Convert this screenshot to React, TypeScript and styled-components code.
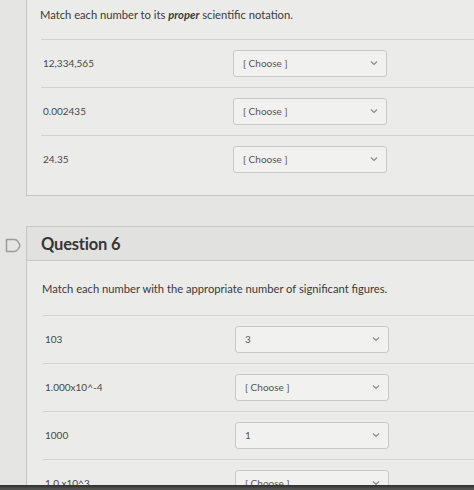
import React from "react";
import styled, { createGlobalStyle } from "styled-components";

const GlobalStyle = createGlobalStyle`
  html, body {
    margin: 0;
    padding: 0;
    background: #e5e5e3;
  }
  body {
    font-family: Lato, "Open Sans", "Liberation Sans", sans-serif;
  }
`;

const Screen = styled.div`
  width: 474px;
  height: 490px;
  display: flex;
  flex-direction: column;
  overflow: hidden;
  background: #e5e5e3;
`;

const Viewport = styled.div`
  height: 485px;
  overflow: hidden;
  flex: none;
`;

const Bezel = styled.div`
  flex: 1;
  background: linear-gradient(180deg, #2e2e2e 0%, #4a4a48 60%, #5b5b59 100%);
`;

const Block = styled.section<{ $gapTop?: number }>`
  display: grid;
  grid-template-columns: 26px 1fr;
  margin-top: ${(p) => p.$gapTop ?? 0}px;
`;

const Gutter = styled.div`
  display: flex;
  justify-content: flex-start;
  padding: 12px 0 0 5px;
`;

const Card = styled.div<{ $topBorder?: boolean }>`
  border-left: 1px solid #c6c6c4;
  border-bottom: 1px solid #c6c6c4;
  border-top: ${(p) => (p.$topBorder ? "1px solid #c6c6c4" : "none")};
  background: #ebebe9;
`;

const Header = styled.header`
  height: 33px;
  display: flex;
  align-items: center;
  padding-left: 14px;
  background: #e1e1df;
  border-bottom: 1px solid #c9c9c7;
`;

const HeaderTitle = styled.h2`
  margin: 0;
  font-size: 16.5px;
  font-weight: 700;
  color: #363636;
  letter-spacing: -0.2px;
`;

const Body = styled.div<{ $padTop: number; $indent: number }>`
  padding: ${(p) => p.$padTop}px 0 12px ${(p) => p.$indent}px;
`;

const Prompt = styled.p<{ $gap: number }>`
  margin: 0 0 ${(p) => p.$gap}px -1px;
  font-size: 11.2px;
  line-height: 16px;
  color: #3a3a3a;
  em {
    font-weight: 700;
  }
`;

const Row = styled.div`
  display: grid;
  grid-template-columns: 192px 154px 1fr;
  align-items: center;
  height: 48px;
  border-top: 1px solid #d2d2d0;
  padding-bottom: 1px;
  box-sizing: border-box;
`;

const Term = styled.span`
  padding-left: 2px;
  font-size: 10px;
  color: #484848;
`;

const Select = styled.div`
  height: 27px;
  box-sizing: border-box;
  display: flex;
  align-items: center;
  justify-content: space-between;
  padding: 0 8px 0 9px;
  background: #f1f1ef;
  border: 1px solid #c8c8c6;
  border-radius: 3px;
  font-size: 10px;
  color: #555555;
`;

const Chevron = () => (
  <svg width="8" height="6" viewBox="0 0 8 6">
    <path d="M1 1.5 L4 4.5 L7 1.5" fill="none" stroke="#8a8a8a" strokeWidth="1.2" />
  </svg>
);

const FlagIcon = () => (
  <svg width="16" height="15" viewBox="0 0 16 15">
    <path
      d="M1.5 1.5 H9.5 Q11.5 1.5 13 3.6 L14.6 6.4 Q15 7.5 14.6 8.6 L13 11.4 Q11.5 13.5 9.5 13.5 H1.5 Z"
      fill="none"
      stroke="#9c9c9a"
      strokeWidth="1.5"
      strokeLinejoin="round"
    />
  </svg>
);

type Pair = { term: string; answer?: string };

const first: Pair[] = [
  { term: "12,334,565" },
  { term: "0.002435" },
  { term: "24.35" },
];

const second: Pair[] = [
  { term: "103", answer: "3" },
  { term: "1.000x10^-4" },
  { term: "1000", answer: "1" },
  { term: "1.0 x10^3" },
];

function Rows({ items }: { items: Pair[] }) {
  return (
    <div>
      {items.map((item) => (
        <Row key={item.term}>
          <Term>{item.term}</Term>
          <Select role="combobox">
            <span>{item.answer ?? "[ Choose ]"}</span>
            <Chevron />
          </Select>
          <span />
        </Row>
      ))}
    </div>
  );
}

export default function App() {
  return (
    <Screen>
      <GlobalStyle />
      <Viewport>
        <Block>
          <div />
          <Card>
            <Body $padTop={7} $indent={14}>
              <Prompt $gap={16}>
                Match each number to its <em>proper</em> scientific notation.
              </Prompt>
              <Rows items={first} />
            </Body>
          </Card>
        </Block>
        <Block $gapTop={30}>
          <Gutter>
            <FlagIcon />
          </Gutter>
          <Card $topBorder>
            <Header>
              <HeaderTitle>Question 6</HeaderTitle>
            </Header>
            <Body $padTop={20} $indent={16}>
              <Prompt $gap={18}>
                Match each number with the appropriate number of significant figures.
              </Prompt>
              <Rows items={second} />
            </Body>
          </Card>
        </Block>
      </Viewport>
      <Bezel />
    </Screen>
  );
}
